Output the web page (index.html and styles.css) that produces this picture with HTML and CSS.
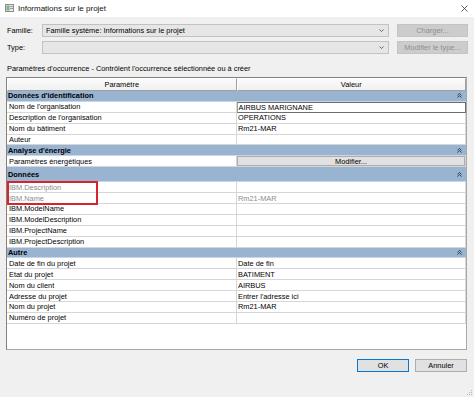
FILE: index.html
```html
<!DOCTYPE html>
<html lang="fr">
<head>
<meta charset="utf-8">
<title>Informations sur le projet</title>
<link rel="stylesheet" href="styles.css">
</head>
<body>
<div class="window">
  <div class="titlebar">
    <svg class="app-icon" width="9" height="8" viewBox="0 0 9 8">
      <rect x="0.5" y="0.5" width="8" height="7" fill="#e8ece8" stroke="#8c8c8c"/>
      <rect x="1.5" y="1.5" width="3" height="5" fill="#7fae8a"/>
      <rect x="5" y="2" width="3" height="1" fill="#9a9a9a"/>
      <rect x="5" y="4" width="3" height="1" fill="#9a9a9a"/>
    </svg>
    <span class="title">Informations sur le projet</span>
    <svg class="close" width="7" height="7" viewBox="0 0 7 7">
      <path d="M0.5 0.5 L6.5 6.5 M6.5 0.5 L0.5 6.5" stroke="#333" stroke-width="0.8" fill="none"/>
    </svg>
  </div>

  <div class="content">
    <div class="field-row">
      <span class="field-label">Famille:</span>
      <div class="combo">
        <span class="combo-text">Famille système: Informations sur le projet</span>
        <svg class="combo-arrow" width="5" height="3" viewBox="0 0 5 3"><path d="M0.5 0.5 L2.5 2.5 L4.5 0.5" stroke="#444" stroke-width="0.8" fill="none"/></svg>
      </div>
      <div class="btn btn-disabled">Charger...</div>
    </div>
    <div class="field-row">
      <span class="field-label">Type:</span>
      <div class="combo">
        <span class="combo-text"></span>
        <svg class="combo-arrow" width="5" height="3" viewBox="0 0 5 3"><path d="M0.5 0.5 L2.5 2.5 L4.5 0.5" stroke="#444" stroke-width="0.8" fill="none"/></svg>
      </div>
      <div class="btn btn-disabled">Modifier le type...</div>
    </div>

    <div class="caption">Paramètres d'occurrence - Contrôlent l'occurrence sélectionnée ou à créer</div>

    <div class="grid-frame">
      <div class="grid-header">
        <div class="hcell">Paramètre</div>
        <div class="hcell">Valeur</div>
      </div>

      <div class="group"><span>Données d'identification</span><svg class="collapse" width="5" height="5" viewBox="0 0 5 5"><path d="M0.5 2.3 L2.5 0.5 L4.5 2.3 M0.5 4.5 L2.5 2.7 L4.5 4.5" stroke="#222" stroke-width="0.8" fill="none"/></svg></div>
      <div class="row"><div class="cell">Nom de l'organisation</div><div class="cell value selected">AIRBUS MARIGNANE</div></div>
      <div class="row"><div class="cell">Description de l'organisation</div><div class="cell value">OPERATIONS</div></div>
      <div class="row"><div class="cell">Nom du bâtiment</div><div class="cell value">Rm21-MAR</div></div>
      <div class="row"><div class="cell">Auteur</div><div class="cell value"></div></div>

      <div class="group"><span>Analyse d'énergie</span><svg class="collapse" width="5" height="5" viewBox="0 0 5 5"><path d="M0.5 2.3 L2.5 0.5 L4.5 2.3 M0.5 4.5 L2.5 2.7 L4.5 4.5" stroke="#222" stroke-width="0.8" fill="none"/></svg></div>
      <div class="row"><div class="cell">Paramètres énergétiques</div><div class="cell value"><div class="cell-btn">Modifier...</div></div></div>

      <div class="group group-tall"><span>Données</span><svg class="collapse" width="5" height="5" viewBox="0 0 5 5"><path d="M0.5 2.3 L2.5 0.5 L4.5 2.3 M0.5 4.5 L2.5 2.7 L4.5 4.5" stroke="#222" stroke-width="0.8" fill="none"/></svg></div>
      <div class="highlight">
        <div class="row readonly"><div class="cell">IBM.Description</div><div class="cell value"></div></div>
        <div class="row readonly"><div class="cell">IBM.Name</div><div class="cell value">Rm21-MAR</div></div>
      </div>
      <div class="row"><div class="cell">IBM.ModelName</div><div class="cell value"></div></div>
      <div class="row"><div class="cell">IBM.ModelDescription</div><div class="cell value"></div></div>
      <div class="row"><div class="cell">IBM.ProjectName</div><div class="cell value"></div></div>
      <div class="row"><div class="cell">IBM.ProjectDescription</div><div class="cell value"></div></div>

      <div class="group"><span>Autre</span><svg class="collapse" width="5" height="5" viewBox="0 0 5 5"><path d="M0.5 2.3 L2.5 0.5 L4.5 2.3 M0.5 4.5 L2.5 2.7 L4.5 4.5" stroke="#222" stroke-width="0.8" fill="none"/></svg></div>
      <div class="row"><div class="cell">Date de fin du projet</div><div class="cell value">Date de fin</div></div>
      <div class="row"><div class="cell">Etat du projet</div><div class="cell value">BATIMENT</div></div>
      <div class="row"><div class="cell">Nom du client</div><div class="cell value">AIRBUS</div></div>
      <div class="row"><div class="cell">Adresse du projet</div><div class="cell value">Entrer l'adresse ici</div></div>
      <div class="row"><div class="cell">Nom du projet</div><div class="cell value">Rm21-MAR</div></div>
      <div class="row"><div class="cell">Numéro de projet</div><div class="cell value"></div></div>
    </div>

    <div class="footer">
      <div class="btn btn-default">OK</div>
      <div class="btn">Annuler</div>
    </div>
  </div>

  <svg class="grip" width="7" height="7" viewBox="0 0 7 7">
    <g fill="#b5b5b5">
      <rect x="5" y="1" width="1" height="1"/>
      <rect x="3" y="3" width="1" height="1"/><rect x="5" y="3" width="1" height="1"/>
      <rect x="1" y="5" width="1" height="1"/><rect x="3" y="5" width="1" height="1"/><rect x="5" y="5" width="1" height="1"/>
    </g>
  </svg>
</div>
</body>
</html>
```

FILE: styles.css
```css
html, body {
  margin: 0;
  padding: 0;
}

body {
  background: #f0f0f0;
  font-family: "Liberation Sans", Arial, sans-serif;
  font-size: 7.4px;
  color: #000;
}

.window {
  position: relative;
  width: 474px;
  height: 397px;
  overflow: hidden;
  background: #f0f0f0;
}

/* Title bar */
.titlebar {
  height: 16px;
  background: #ffffff;
  display: flex;
  align-items: center;
  padding: 0 0 1px 5px;
}

.app-icon {
  flex: none;
}

.title {
  margin-left: 4px;
  font-size: 8px;
  color: #111;
  flex: 1;
}

.close {
  margin-right: 6px;
}

/* Content */
.content {
  padding: 7px 6px 0 6px;
}

.field-row {
  display: flex;
  align-items: center;
  height: 13px;
  margin-bottom: 4px;
}

.field-label {
  width: 35px;
  padding-left: 1px;
  flex: none;
}

.combo {
  width: 347px;
  height: 13px;
  box-sizing: border-box;
  border: 1px solid #c2c2c2;
  background: #e6e6e6;
  display: flex;
  align-items: center;
  padding: 0 4px 0 3px;
  flex: none;
}

.combo-text {
  flex: 1;
}

.combo-arrow {
  flex: none;
}

.btn {
  height: 13px;
  box-sizing: border-box;
  border: 1px solid #adadad;
  background: #e1e1e1;
  display: flex;
  align-items: center;
  justify-content: center;
  width: 52px;
}

.field-row .btn {
  margin-left: 8px;
  width: 71px;
}

.btn-disabled {
  background: #cccccc;
  border-color: #c4c4c4;
  color: #8f8f8f;
}

.btn-default {
  border-color: #0078d7;
}

.caption {
  margin-top: 10px;
  padding-left: 1px;
  height: 9px;
  line-height: 9px;
}

/* Property grid */
.grid-frame {
  position: relative;
  margin-top: 4px;
  width: 461px;
  height: 273px;
  box-sizing: border-box;
  border: 1px solid #a8a8a8;
  border-left-color: #828282;
  border-top-color: #828282;
  background: #ffffff;
  overflow: hidden;
}

.grid-header {
  display: flex;
  height: 13px;
}

.hcell {
  flex: 1;
  box-sizing: border-box;
  display: flex;
  align-items: center;
  justify-content: center;
  background: linear-gradient(#fbfbfb, #f0f0f0);
  border-top: 1px solid #ffffff;
  border-left: 1px solid #ffffff;
  border-right: 1px solid #a0a0a0;
  border-bottom: 1px solid #a0a0a0;
}

.group {
  height: 10.9px;
  box-sizing: border-box;
  background: #99b4d1;
  border-bottom: 1px solid #c9d6e6;
  display: flex;
  align-items: center;
  padding: 0 4px 0 1px;
  font-weight: bold;
}

.group-tall {
  height: 15px;
}

.group span {
  flex: 1;
}

.row {
  display: flex;
  height: 10.9px;
}

.cell {
  flex: 1;
  box-sizing: border-box;
  border-right: 1px solid #d6d6d6;
  border-bottom: 1px solid #d6d6d6;
  display: flex;
  align-items: center;
  padding-left: 2px;
  white-space: nowrap;
  overflow: hidden;
}

.cell.value {
  padding-left: 1px;
}

.cell.selected {
  border: 1px solid #6d6d6d;
  border-left-color: #a0a0a0;
}

.readonly .cell {
  color: #8c8c8c;
}

.cell-btn {
  flex: 1;
  height: 10px;
  box-sizing: border-box;
  margin-left: -1px;
  border: 1px solid #adadad;
  background: #e1e1e1;
  display: flex;
  align-items: center;
  justify-content: center;
}

.highlight {
  position: relative;
}

.highlight::after {
  content: "";
  position: absolute;
  left: 0;
  top: -1px;
  width: 91px;
  height: 24px;
  box-sizing: border-box;
  border: 2px solid #d8232a;
}

/* Footer */
.footer {
  display: flex;
  justify-content: flex-end;
  gap: 6px;
  margin-top: 9px;
  padding-right: 1px;
}

.grip {
  position: absolute;
  right: 1px;
  bottom: 1px;
}
```
